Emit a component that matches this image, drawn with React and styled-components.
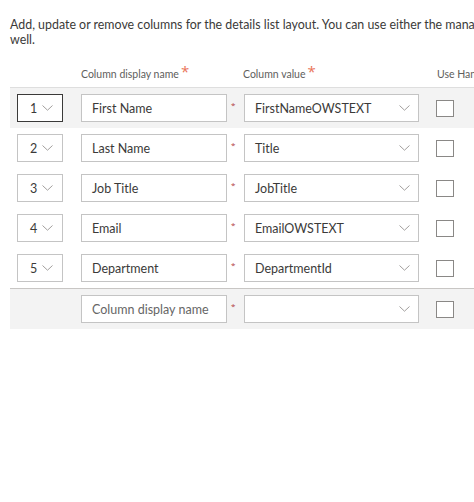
import React from 'react';
import styled, { createGlobalStyle } from 'styled-components';

const GlobalStyle = createGlobalStyle`
  html, body {
    margin: 0;
    padding: 0;
    background: #ffffff;
    overflow: hidden;
  }
  body {
    font-family: Lato, "Open Sans", Arial, sans-serif;
    color: #323130;
  }
`;

const columns = [
  { order: 1, name: 'First Name', value: 'FirstNameOWSTEXT', active: true },
  { order: 2, name: 'Last Name', value: 'Title' },
  { order: 3, name: 'Job Title', value: 'JobTitle' },
  { order: 4, name: 'Email', value: 'EmailOWSTEXT' },
  { order: 5, name: 'Department', value: 'DepartmentId' }
];

function Chevron () {
  return (
    <svg width='11' height='6' viewBox='0 0 11 6' fill='none'>
      <path d='M0.5 0.5 L5.5 5.2 L10.5 0.5' stroke='#a19f9d' strokeWidth='1' />
    </svg>
  );
}

function App () {
  return (
    <Page>
      <GlobalStyle />
      <Description>
        <Line>Add, update or remove columns for the details list layout. You can use either the managed properties or the list fields as</Line>
        <Line>well.</Line>
      </Description>

      <Table>
        <HeaderRow>
          <OrderSpacer />
          <HeaderCell width='162px'>Column display name<HeaderStar>*</HeaderStar></HeaderCell>
          <HeaderCell width='194px'>Column value<HeaderStar>*</HeaderStar></HeaderCell>
          <HeaderCell>Use Handlebars</HeaderCell>
        </HeaderRow>

        {columns.map(col => (
          <Row key={col.order} shaded={col.active}>
            <OrderDropdown active={col.active}>
              <span>{col.order}</span>
              <Chevron />
            </OrderDropdown>
            <NameField>
              <TextBox>{col.name}</TextBox>
              <RequiredMark>*</RequiredMark>
            </NameField>
            <ValueDropdown>
              <span>{col.value}</span>
              <Chevron />
            </ValueDropdown>
            <CheckBox />
          </Row>
        ))}

        <Row shaded divided>
          <OrderSpacer />
          <NameField>
            <TextBox placeholder>Column display name</TextBox>
            <RequiredMark>*</RequiredMark>
          </NameField>
          <ValueDropdown>
            <span />
            <Chevron />
          </ValueDropdown>
          <CheckBox />
        </Row>
      </Table>
    </Page>
  );
}

export default App;

const Page = styled.div`
  width: 474px;
  overflow: hidden;
  padding: 17px 0 0 10px;
  height: 502px;
  box-sizing: border-box;
`;

const Description = styled.div`
  font-size: 12.4px;
  line-height: 15px;
  color: #3b3a39;
`;

const Line = styled.div`
  white-space: nowrap;
`;

const Table = styled.div`
  display: flex;
  flex-direction: column;
  width: 600px;
`;

const HeaderRow = styled.div`
  display: flex;
  align-items: flex-end;
  box-sizing: border-box;
  height: 41px;
  padding: 0 0 6px 7px;
  border-bottom: 1px solid #dedede;
`;

const OrderSpacer = styled.div`
  width: 64px;
  flex: none;
`;

const HeaderCell = styled.div`
  width: ${props => props.width || 'auto'};
  flex: none;
  font-size: 10.5px;
  line-height: 14px;
  color: #605e5c;
  white-space: nowrap;
`;

const HeaderStar = styled.span`
  font-family: "Open Sans", Arial, sans-serif;
  color: #ea7458;
  font-size: 15px;
  margin-left: 2px;
  vertical-align: 1px;
  line-height: 0;
`;

const Row = styled.div`
  display: flex;
  align-items: center;
  box-sizing: border-box;
  height: ${props => (props.divided ? '41px' : '40px')};
  padding-left: 7px;
  background: ${props => (props.shaded ? '#f3f3f3' : '#ffffff')};
  border-top: ${props => (props.divided ? '1px solid #c8c6c4' : 'none')};
`;

const OrderDropdown = styled.div`
  width: 46px;
  height: 28px;
  box-sizing: border-box;
  flex: none;
  margin-right: 18px;
  display: flex;
  align-items: center;
  justify-content: space-between;
  padding: 0 9px 0 12px;
  background: #ffffff;
  border: 1px solid ${props => (props.active ? '#3b3a39' : '#c4c4c4')};
  font-size: 12.5px;
  color: #3b3a39;
`;

const NameField = styled.div`
  display: flex;
  align-items: flex-start;
  flex: none;
  width: 163px;
  height: 28px;
`;

const TextBox = styled.div`
  width: 146px;
  height: 28px;
  box-sizing: border-box;
  flex: none;
  display: flex;
  align-items: center;
  padding-left: 10px;
  background: #ffffff;
  border: 1px solid #c4c4c4;
  font-size: 12.5px;
  color: ${props => (props.placeholder ? '#666666' : '#3b3a39')};
  white-space: nowrap;
`;

const RequiredMark = styled.span`
  font-family: "Open Sans", Arial, sans-serif;
  font-size: 8px;
  line-height: 8px;
  color: #b0383c;
  margin: 7px 0 0 4px;
`;

const ValueDropdown = styled.div`
  width: 175px;
  height: 28px;
  box-sizing: border-box;
  flex: none;
  margin-right: 17px;
  display: flex;
  align-items: center;
  justify-content: space-between;
  padding: 0 8px 0 10px;
  background: #ffffff;
  border: 1px solid #c4c4c4;
  font-size: 12.5px;
  color: #3b3a39;
  white-space: nowrap;
`;

const CheckBox = styled.div`
  width: 18px;
  height: 17px;
  box-sizing: border-box;
  flex: none;
  background: #ffffff;
  border: 1px solid #8a8886;
`;
